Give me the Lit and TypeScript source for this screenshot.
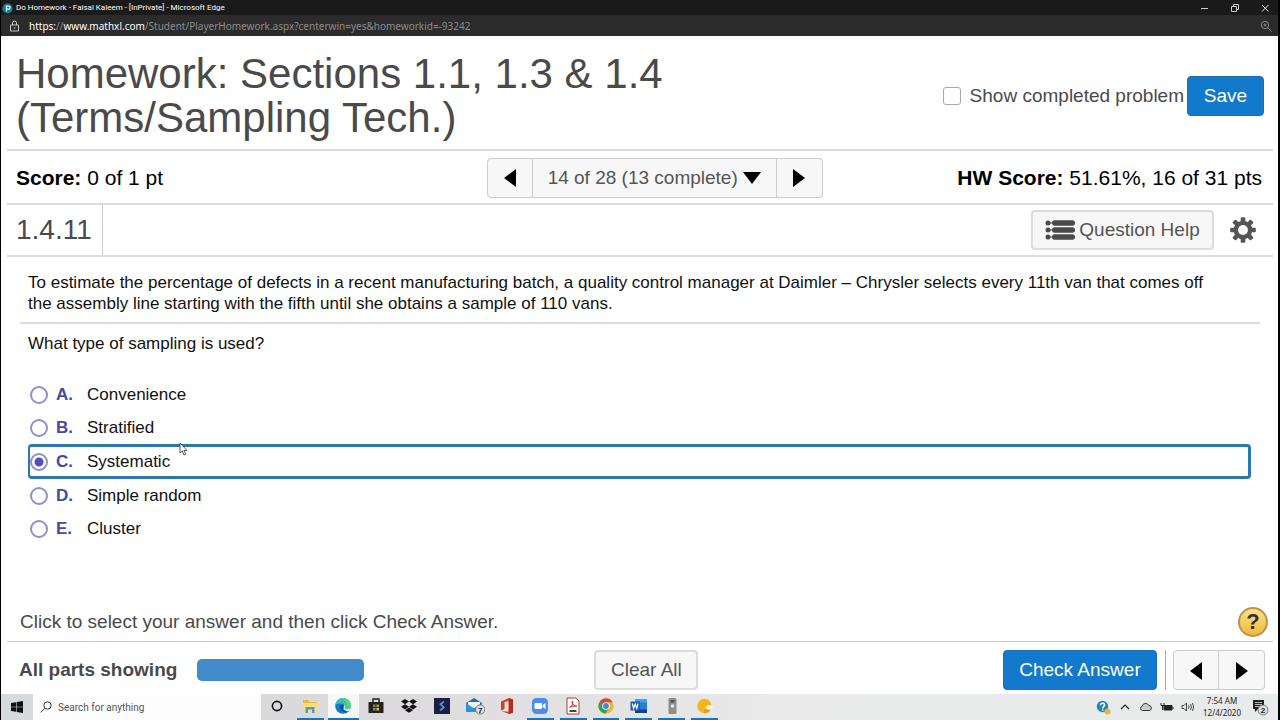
import { LitElement, html, css, svg } from "lit";
import { customElement, state } from "lit/decorators.js";
import { classMap } from "lit/directives/class-map.js";

const triangle = (dir: "left" | "right" | "down") => {
  const paths = {
    left: "M13 0V18L1 9Z",
    right: "M1 0V18L13 9Z",
    down: "M0 1H18L9 13Z",
  };
  return dir === "down"
    ? html`<svg width="18" height="14" viewBox="0 0 18 14" aria-hidden="true"><path d=${paths.down} /></svg>`
    : html`<svg width="14" height="18" viewBox="0 0 14 18" aria-hidden="true"><path d=${paths[dir]} /></svg>`;
};

const choices = [
  { letter: "A", text: "Convenience" },
  { letter: "B", text: "Stratified" },
  { letter: "C", text: "Systematic" },
  { letter: "D", text: "Simple random" },
  { letter: "E", text: "Cluster" },
];

const taskbarApps = [
  {
    name: "Cortana",
    open: false,
    art: svg`<circle cx="10" cy="10" r="4.6" fill="none" stroke="#111" stroke-width="1.6"/>`,
  },
  {
    name: "File Explorer",
    open: true,
    art: svg`<path d="M3 4h5l1.500 2H17v10H3z" fill="#e9b93c"/><path d="M3 7h14v9H3z" fill="#fbdc7a"/><path d="M5.500 17v-6h9v6h-2.500v-3.500H8V17z" fill="#4f9bc4"/>`,
  },
  {
    name: "Edge",
    open: true,
    art: svg`<circle cx="10" cy="10" r="7.800" fill="#1879c9"/><path d="M2.300 9.200C3 4.800 6 2.200 10 2.200c4.500 0 7.800 3.200 7.800 6.900 0 2.600-1.900 4.200-4.500 4.200-1.900 0-2.800-.8-2.300-1.700.6-1.400.2-4-3-4C5.600 7.600 3.200 8.200 2.300 9.200z" fill="#35c1b5"/><path d="M10 2.200c4.500 0 7.800 3.200 7.800 6.900 0 2.600-1.900 4.200-4.500 4.200C16 9 14 5 8 2.500z" fill="#5bd76a"/><path d="M7.200 9.600c-1 4 2 7.200 7.300 6.600 1-.5 1.800-1.200 2.400-2.200-3 1.200-6.500.4-6.500-2.600 0-1 .6-1.500.6-2.100-1.300-.9-3.200-.6-3.800.3z" fill="#0f4f9b"/><path d="M11 9.300c2.200.2 1 2 .4 2.700.5 1.200 3.500 1.700 5.600.6l1 2-3.500 1-4-2z" fill="#f2f2f2"/>`,
  },
  {
    name: "Store",
    open: false,
    art: svg`<path d="M7 6V3h6v3" fill="none" stroke="#222" stroke-width="1.500"/><path d="M2.500 6h15v11h-15z" fill="#222"/><path d="M7 8.500h2.600v2.600H7z" fill="#e8562a"/><path d="M10.400 8.500H13v2.600h-2.600z" fill="#7db928"/><path d="M7 11.900h2.600v2.600H7z" fill="#2aa4e0"/><path d="M10.400 11.900H13v2.600h-2.600z" fill="#f6b81a"/>`,
  },
  {
    name: "Dropbox",
    open: false,
    art: svg`<path d="M6 3l4 2.600-4 2.600L2 5.600zM14 3l4 2.600-4 2.600-4-2.600zM6 8.200l4 2.600-4 2.600-4-2.600zM14 8.200l4 2.600-4 2.600-4-2.600zM6 14.200l4-2.600 4 2.600-4 2.600z" fill="#111"/>`,
  },
  {
    name: "Shortcut",
    open: false,
    art: svg`<path d="M2 2h16v16H2z" fill="#1c1d44"/><path d="M12 5.500L8.500 8.200l3.200 3.200L8 14.500" fill="none" stroke="#4791dd" stroke-width="1.800"/>`,
  },
  {
    name: "Mail",
    open: false,
    art: svg`<path d="M1 7l8-5 8 5v9H1z" fill="#1672b5"/><path d="M3 6h12v6H3z" fill="#f2f6fa"/><path d="M1 7l8 5.500L17 7v9H1z" fill="#2c93d6"/><circle cx="15.200" cy="13.500" r="4.600" fill="#dedede" stroke="#666" stroke-width=".8"/><text x="15.200" y="16.500" text-anchor="middle" class="badge-text">7</text>`,
  },
  {
    name: "Office",
    open: false,
    art: svg`<path d="M4 5.500L12 2l4 1.500v13L12 18l-7.500-3 7 .8V5L7.500 6v7L4 14.500z" fill="#d63b22"/><path d="M12 2l4 1.500v13L12 18z" fill="#b82a1b"/>`,
  },
  {
    name: "Zoom",
    open: true,
    art: svg`<rect x="2" y="2" width="16" height="16" rx="4.500" fill="#4a8cf0"/><rect x="4.500" y="7" width="7.500" height="6" rx="1.200" fill="#fff"/><path d="M12.500 9l3-2v6l-3-2z" fill="#fff"/>`,
  },
  {
    name: "Acrobat",
    open: true,
    art: svg`<path d="M4 2h9l3 3v13H4z" fill="#fff" stroke="#b33a32"/><path d="M6.500 11.500c2.500-1 3.500-3.500 3.300-5.600-.2-1-1.300-.6-.8.8.5 1.700 2.500 3.500 5 3.400M7 11c2-.8 4-1 6.500-1" fill="none" stroke="#d0281f"/><path d="M6.500 14h7v2h-7z" fill="#444"/>`,
  },
  {
    name: "Chrome",
    open: true,
    art: svg`<circle cx="10" cy="10" r="7.600" fill="#e8b92c"/><path d="M10 10L3.400 6.200A7.600 7.600 0 0 1 16.600 6.200H10z" fill="#d9453a"/><path d="M3.400 6.200A7.600 7.600 0 0 0 9.500 17.600L13 12z" fill="#3c9e56"/><circle cx="10" cy="10" r="3.800" fill="#fff"/><circle cx="10" cy="10" r="2.900" fill="#4583e0"/>`,
  },
  {
    name: "Word",
    open: true,
    art: svg`<path d="M6 3h12v14H6z" fill="#2b7cd3"/><path d="M6 3h12v3.500H6z" fill="#41a5ee"/><path d="M6 13.500h12V17H6z" fill="#103f91"/><path d="M1.500 5.500h9.500v9H1.500z" fill="#185abd"/><path d="M3.300 7.500l1.300 5 1.600-4.500 1.600 4.500 1.300-5" fill="none" stroke="#fff" stroke-width="1.200"/>`,
  },
  {
    name: "Recorder",
    open: true,
    art: svg`<rect x="6.500" y="2" width="8" height="16" rx="1.500" fill="#8e8e8e"/><path d="M8.500 4h4v2.500h-4z" fill="#555"/><circle cx="10.500" cy="10" r="1.800" fill="#e8e8e8"/>`,
  },
  {
    name: "Norton",
    open: true,
    art: svg`<circle cx="9.500" cy="10" r="7.200" fill="#f5b41c"/><path d="M9.500 17.200a7.200 7.200 0 0 0 6.300-3.700c-2 1-4.500.8-6-.7z" fill="#e79a10"/><path d="M10.500 12c.5-3.500 5-4 7.500-1.500l-1.500 3c-2 .3-4.500.2-6-1.500z" fill="#fff7dc"/>`,
  },
];

@customElement("edge-chrome")
class EdgeChrome extends LitElement {
  static styles = css`
    :host {
      display: block;
      font-family: "Noto Sans", "Open Sans", sans-serif;
      color: #fff;
    }
    .title {
      display: flex;
      align-items: center;
      height: 15px;
      padding: 0 8px 0 1px;
      background: #1a1a1a;
      font-family: Roboto, sans-serif;
      font-size: 8px;
      line-height: 15px;
      white-space: nowrap;
    }
    .caption {
      flex: 1;
      padding-left: 3px;
    }
    .windows {
      display: flex;
      gap: 20px;
    }
    .windows button {
      display: flex;
      padding: 0;
      border: 0;
      background: none;
    }
    .address {
      display: flex;
      align-items: center;
      height: 21px;
      padding: 0 6px 0 8px;
      background: #2b2b2b;
      font-size: 10px;
      white-space: nowrap;
    }
    .url {
      flex: 1;
      padding-left: 9px;
      color: #8c8c8c;
    }
    .strong {
      color: #fff;
    }
    svg {
      display: block;
    }
  `;

  render() {
    return html`
      <div class="title">
        <svg width="11" height="12" viewBox="0 0 11 12" aria-hidden="true">
          <circle cx="5.500" cy="6.500" r="5" fill="#0f7f9e" />
          <path d="M4.500 9.500V4h2a1.500 1.500 0 0 1 0 3.200h-2" fill="none" stroke="#fff" stroke-width="1.200" />
        </svg>
        <span class="caption">Do Homework - Faisal Kaleem - [InPrivate] - Microsoft Edge</span>
        <div class="windows">
          <button aria-label="Minimize">
            <svg width="10" height="10" viewBox="0 0 10 10"><path d="M1 5.500h7" stroke="#ccc" /></svg>
          </button>
          <button aria-label="Restore">
            <svg width="10" height="10" viewBox="0 0 10 10"><path d="M1.500 3.500h5v5h-5zM3.500 3V1.500h5v5H7" fill="none" stroke="#ccc" /></svg>
          </button>
          <button aria-label="Close">
            <svg width="10" height="10" viewBox="0 0 10 10"><path d="M2 2l6.500 6.500M8.500 2L2 8.500" stroke="#eee" /></svg>
          </button>
        </div>
      </div>
      <div class="address">
        <svg width="11" height="12" viewBox="0 0 11 12" aria-hidden="true">
          <path d="M1.500 5h8v6h-8zM3.500 5V3a2 2 0 0 1 4 0v2" fill="none" stroke="#c8c8c8" />
          <circle cx="5.500" cy="8" r=".8" fill="#c8c8c8" />
        </svg>
        <span class="url"
          ><span class="strong">https:</span>//<span class="strong">www.mathxl.com</span>/Student/PlayerHomework.aspx?centerwin=yes&amp;homeworkid=-93242</span
        >
        <svg width="12" height="12" viewBox="0 0 12 12" aria-hidden="true">
          <circle cx="5" cy="5" r="3.700" fill="none" stroke="#8a8a8a" />
          <path d="M3.500 5h3M5 3.500v3M8 8l3.500 3.500" stroke="#8a8a8a" />
        </svg>
      </div>
    `;
  }
}

@customElement("task-bar")
class TaskBar extends LitElement {
  static styles = css`
    :host {
      display: flex;
      align-items: stretch;
      height: 26px;
      background: linear-gradient(90deg, #d5dbdc, #dcdadd 30%, #e9e9e9 60%, #e8ebeb);
      font-family: "Noto Sans", "Open Sans", sans-serif;
    }
    button {
      display: flex;
      align-items: center;
      justify-content: center;
      padding: 0;
      border: 0;
      background: none;
    }
    svg {
      display: block;
    }
    .start {
      width: 32px;
    }
    .search {
      display: flex;
      align-items: center;
      gap: 6px;
      width: 228px;
      box-sizing: border-box;
      padding-left: 7px;
      background: #fdfdfd;
    }
    .search input {
      flex: 1;
      min-width: 0;
      padding: 0;
      border: 0;
      outline: 0;
      background: none;
      font: 10px Roboto, sans-serif;
    }
    .search input::placeholder {
      color: #555;
      opacity: 1;
    }
    .apps {
      display: grid;
      grid-template-columns: repeat(14, 1fr);
      width: 460px;
    }
    .app {
      box-sizing: border-box;
      border-bottom: 2px solid transparent;
      margin: 0 3px;
    }
    .open {
      border-bottom-color: #1b73bd;
    }
    .current {
      margin: 0 1px;
      background: #f5f7f8;
    }
    .badge-text {
      font: bold 8px "Liberation Sans", sans-serif;
      fill: #222;
    }
    .tray {
      display: flex;
      align-items: center;
      gap: 7px;
      margin-left: auto;
      padding-right: 7px;
    }
    .clock {
      width: 40px;
      font-size: 8px;
      line-height: 12px;
      text-align: center;
      color: #222;
      white-space: nowrap;
    }
  `;

  render() {
    return html`
      <button class="start" aria-label="Start">
        <svg width="12" height="12" viewBox="0 0 12 12"><path d="M0 2l5-.8v4.500H0zM5.600 1.100L12 0v5.700H5.600zM0 6.300h5v4.500L0 10zM5.600 6.300H12V12l-6.400-1.100z" fill="#111" /></svg>
      </button>
      <label class="search">
        <svg width="12" height="12" viewBox="0 0 12 12" aria-hidden="true">
          <circle cx="7.500" cy="4.500" r="3.700" fill="none" stroke="#333" />
          <path d="M5 7.200L.8 11.400" stroke="#333" />
        </svg>
        <input type="text" placeholder="Search for anything" aria-label="Search for anything" />
      </label>
      <div class="apps">
        ${taskbarApps.map(
          (app) => html`
            <button class=${classMap({ app: true, open: app.open, current: app.name === "Edge" })} aria-label=${app.name}>
              <svg width="20" height="20" viewBox="0 0 20 20">${app.art}</svg>
            </button>
          `
        )}
      </div>
      <div class="tray">
        <svg width="15" height="15" viewBox="0 0 15 15" aria-hidden="true">
          <circle cx="6.500" cy="6.500" r="5.700" fill="#2186b8" />
          <path d="M4.500 5.200C4.700 2.500 9 2.800 8.600 5.300 8.300 6.500 6.700 6.800 6.700 8.500M6.700 9.600v1.200" fill="none" stroke="#fff" stroke-width="1.500" />
          <circle cx="11.500" cy="11.500" r="3" fill="#eeb23a" />
        </svg>
        <svg width="14" height="12" viewBox="0 0 14 12" aria-hidden="true"><path d="M3 8l4-4 4 4" fill="none" stroke="#222" stroke-width="1.200" /></svg>
        <svg width="14" height="12" viewBox="0 0 14 12" aria-hidden="true">
          <path d="M3.500 9.500a2.200 2.200 0 0 1-.3-4.300 3.500 3.500 0 0 1 6.600-.7 2.600 2.600 0 0 1 1 5z" fill="#ccc" stroke="#333" />
        </svg>
        <svg width="14" height="12" viewBox="0 0 14 12" aria-hidden="true">
          <path d="M4 4.500h8v4.500H4z" fill="#222" stroke="#222" /><path d="M13 6v2M1 2v2.500h3V2M2.500 4v5" stroke="#222" fill="none" />
        </svg>
        <svg width="14" height="12" viewBox="0 0 14 12" aria-hidden="true">
          <path d="M1 4.500h2L5.500 2v8L3 7.500H1zM7.500 4.300q1 1.700 0 3.400M9.500 3q1.800 3 0 6M11.500 2q2.200 4 0 8" fill="none" stroke="#333" stroke-width=".9" />
        </svg>
        <div class="clock">7:54 AM<br />12/4/2020</div>
        <svg width="22" height="20" viewBox="0 0 22 20" aria-hidden="true">
          <path d="M4 3h11v9H9l-3 3v-3H4z" fill="#222" />
          <path d="M6 5.500h7M6 7.500h7M6 9.500h5" stroke="#ddd" stroke-width=".8" />
          <circle cx="14" cy="13" r="5" fill="#dcdcdc" stroke="#666" stroke-width=".8" />
          <text x="14" y="16" text-anchor="middle" class="badge-text">2</text>
        </svg>
      </div>
    `;
  }
}

@customElement("app-root")
class AppRoot extends LitElement {
  @state() private selected = "C";

  static styles = css`
    :host {
      display: flex;
      flex-direction: column;
      box-sizing: border-box;
      min-height: 100vh;
      border-left: 1px solid #000;
      border-right: 2px solid #000;
      background: #fff;
      color: #4a4a4a;
      font-family: "Liberation Sans", Arial, sans-serif;
    }
    svg {
      display: block;
    }
    main {
      flex: 1;
      display: flex;
      flex-direction: column;
      padding: 0 5px 0 6px;
    }
    button {
      box-sizing: border-box;
      height: 40px;
      padding: 0;
      font: 19px "Liberation Sans", Arial, sans-serif;
      color: #555;
      border: 1px solid #ccc;
      background: #f7f7f7;
    }
    .primary {
      border-color: #1a6fb5;
      border-radius: 4px;
      background: #1279cd;
      color: #fff;
    }
    .plain {
      border-width: 2px;
      border-color: #dcdcdc;
      border-radius: 4px;
    }
    .bar {
      border-bottom: 2px solid #dcdcdc;
    }
    .header {
      display: flex;
      align-items: center;
      padding: 16px 9px 9px 9px;
    }
    h1 {
      flex: 1;
      margin: 0;
      font-size: 42px;
      font-weight: normal;
      line-height: 44px;
    }
    .completed {
      display: flex;
      align-items: center;
      gap: 9px;
      margin-right: 3px;
      font-size: 19px;
      white-space: nowrap;
    }
    .completed input {
      appearance: none;
      box-sizing: border-box;
      width: 18px;
      height: 18px;
      margin: 0;
      border: 1px solid #aaa;
      border-radius: 3px;
      background: #fff;
    }
    .save {
      width: 77px;
    }
    .score {
      display: grid;
      grid-template-columns: 15fr auto 14fr;
      align-items: center;
      box-sizing: border-box;
      height: 54px;
      padding: 1px 11px 0 9px;
      font-size: 21px;
      color: #000;
      white-space: nowrap;
    }
    .hw {
      text-align: right;
    }
    .pager {
      display: flex;
    }
    .pager button {
      display: flex;
      align-items: center;
      justify-content: center;
      width: 46px;
      padding-top: 1px;
    }
    .pager button + button {
      border-left: 0;
    }
    .pager button:first-child {
      border-radius: 4px 0 0 4px;
    }
    .pager button:last-child {
      border-radius: 0 4px 4px 0;
    }
    .pager .list {
      gap: 5px;
      width: 244px;
    }
    .pager svg {
      fill: #000;
    }
    .toolbar {
      display: flex;
      align-items: center;
      height: 50px;
      padding-right: 17px;
    }
    h2 {
      align-self: stretch;
      margin: 0;
      padding: 0 10px 0 9px;
      border-right: 1px solid #ccc;
      font-size: 28px;
      font-weight: normal;
      line-height: 50px;
    }
    .help {
      display: flex;
      align-items: center;
      justify-content: center;
      gap: 4px;
      width: 183px;
      margin-left: auto;
    }
    .gear {
      height: 28px;
      margin-left: 16px;
      border: 0;
      background: none;
    }
    .question {
      flex: 1;
      padding: 15px 13px 0;
      color: #111;
      font-size: 17px;
      line-height: 21px;
    }
    .question p {
      margin: 0;
      padding: 0 32px 8px 8px;
    }
    .rule {
      border-bottom: 2px solid #dcdcdc;
    }
    fieldset {
      position: relative;
      margin: 0;
      padding: 9px 9px 0 8px;
      border: 0;
    }
    legend {
      float: left;
      width: 100%;
      padding: 0 0 24px;
    }
    .choice {
      clear: both;
      display: flex;
      align-items: center;
      box-sizing: border-box;
      height: 33px;
      padding-left: 2px;
    }
    .choice input {
      appearance: none;
      box-sizing: border-box;
      width: 18px;
      height: 18px;
      margin: 0;
      border: 2px solid #8f8fd0;
      border-radius: 50%;
      background: #fff;
    }
    .choice input:checked {
      background: radial-gradient(circle, #5050b8 0 4px, #fff 5px);
    }
    .chosen {
      height: 35px;
      padding-left: 0;
      border: 3px solid #2879b0;
      border-left-width: 2px;
      border-radius: 4px;
    }
    .letter {
      width: 31px;
      padding-left: 8px;
      color: #434ba5;
      font-weight: bold;
    }
    .cursor {
      position: absolute;
      left: 159px;
      top: 118px;
    }
    .hint {
      display: flex;
      align-items: center;
      justify-content: space-between;
      padding: 0 5px 4px 13px;
      font-size: 19px;
    }
    .about {
      width: 30px;
      height: 30px;
      border: 2px solid #b9964a;
      border-radius: 50%;
      background: linear-gradient(#fce08a, #f3ba3c);
      color: #333;
      font-size: 22px;
      font-weight: bold;
      line-height: 26px;
    }
    .footer {
      display: grid;
      grid-template-columns: 65fr auto 64fr;
      align-items: center;
      height: 53px;
      padding: 4px 8px 0 12px;
      box-sizing: border-box;
      border-top: 1px solid #ccc;
    }
    .parts {
      display: flex;
      align-items: center;
      gap: 20px;
      font-size: 19px;
      font-weight: bold;
    }
    .progress {
      width: 167px;
      height: 22px;
      border-radius: 5px;
      background: #428bca;
    }
    .clear {
      width: 104px;
    }
    .actions {
      display: flex;
      justify-content: flex-end;
    }
    .check {
      width: 154px;
    }
    .divider {
      width: 1px;
      margin: 0 7px 0 8px;
      background: #aaa;
    }
  `;

  render() {
    return html`
      <edge-chrome></edge-chrome>
      <main>
        <header class="header bar">
          <h1>Homework: Sections 1.1, 1.3 &amp; 1.4 (Terms/Sampling Tech.)</h1>
          <label class="completed"><input type="checkbox" />Show completed problem</label>
          <button class="primary save">Save</button>
        </header>

        <section class="score bar">
          <div><b>Score:</b> 0 of 1 pt</div>
          <div class="pager">
            <button aria-label="Previous question">${triangle("left")}</button>
            <button class="list">14 of 28 (13 complete)${triangle("down")}</button>
            <button aria-label="Next question">${triangle("right")}</button>
          </div>
          <div class="hw"><b>HW Score:</b> 51.61%, 16 of 31 pts</div>
        </section>

        <section class="toolbar bar">
          <h2>1.4.11</h2>
          <button class="plain help">
            <svg width="30" height="20" viewBox="0 0 30 20" aria-hidden="true">
              <g fill="#4a4a4a">
                <circle cx="3" cy="3" r="2.500" /><circle cx="3" cy="10" r="2.500" /><circle cx="3" cy="17" r="2.500" />
                <rect x="7" y="0.300" width="23" height="5.400" rx="2.700" />
                <rect x="7" y="7.300" width="23" height="5.400" rx="2.700" />
                <rect x="7" y="14.300" width="23" height="5.400" rx="2.700" />
                <path d="M3 2.400h6v1.200H3zM3 9.400h6v1.200H3zM3 16.400h6v1.200H3z" />
              </g>
            </svg>
            Question Help
          </button>
          <button class="gear" aria-label="Settings">
            <svg width="26" height="26" viewBox="-13 -13 26 26">
              <g fill="#555">
                ${[0, 45, 90, 135].map((a) => svg`<rect x="-2.300" y="-12.800" width="4.600" height="25.600" rx="1" transform="rotate(${a})" />`)}
                <circle r="9.300" />
              </g>
              <circle r="4.900" fill="#fff" />
            </svg>
          </button>
        </section>

        <section class="question">
          <p>
            To estimate the percentage of defects in a recent manufacturing batch, a quality control manager at Daimler –
            Chrysler selects every 11th van that comes off the assembly line starting with the fifth until she obtains a
            sample of 110 vans.
          </p>
          <div class="rule"></div>
          <fieldset>
            <legend>What type of sampling is used?</legend>
            ${choices.map(
              (c) => html`
                <label class=${classMap({ choice: true, chosen: this.selected === c.letter })}>
                  <input
                    type="radio"
                    name="sampling"
                    .checked=${this.selected === c.letter}
                    @change=${() => (this.selected = c.letter)}
                  />
                  <span class="letter">${c.letter}.</span>
                  <span>${c.text}</span>
                </label>
              `
            )}
            <svg class="cursor" width="9" height="14" viewBox="0 0 9 14" aria-hidden="true">
              <path d="M1 1v10l2.300-2 1.700 4 1.700-.8L5 8.500h3z" fill="#fff" stroke="#333" stroke-width=".8" />
            </svg>
          </fieldset>
        </section>

        <div class="hint">
          <span>Click to select your answer and then click Check Answer.</span>
          <button class="about" aria-label="Help">?</button>
        </div>

        <footer class="footer">
          <div class="parts">
            <span>All parts showing</span>
            <div class="progress" role="progressbar" aria-label="Parts showing"></div>
          </div>
          <button class="plain clear">Clear All</button>
          <div class="actions">
            <button class="primary check">Check Answer</button>
            <span class="divider"></span>
            <div class="pager">
              <button aria-label="Previous">${triangle("left")}</button>
              <button aria-label="Next">${triangle("right")}</button>
            </div>
          </div>
        </footer>
      </main>
      <task-bar></task-bar>
    `;
  }
}
